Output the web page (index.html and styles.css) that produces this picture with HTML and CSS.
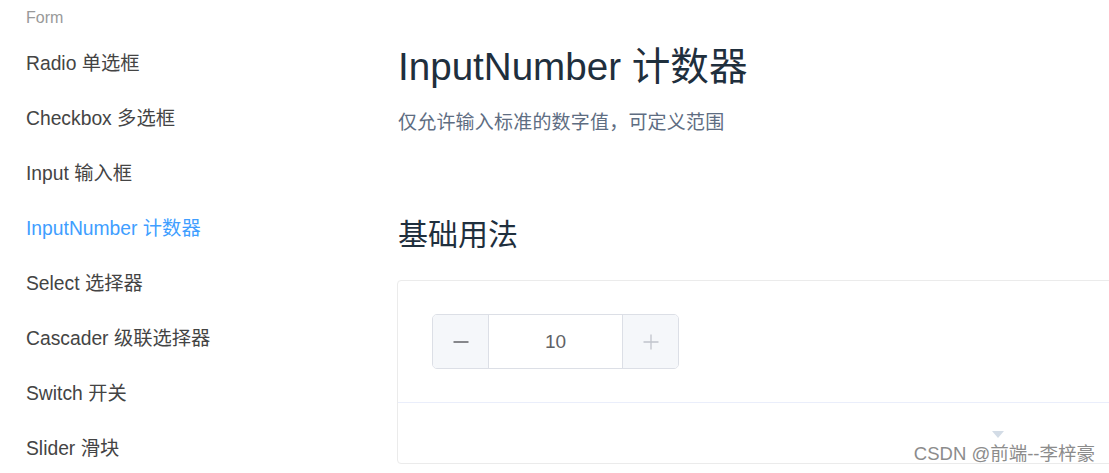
FILE: index.html
```html
<!DOCTYPE html>
<html lang="zh">
<head>
<meta charset="utf-8">
<title>InputNumber 计数器</title>
<link rel="stylesheet" href="styles.css">
</head>
<body>
<div class="page">
  <nav class="side-nav">
    <div class="group-title">Form</div>
    <ul class="nav-list">
      <li class="nav-item">Radio 单选框</li>
      <li class="nav-item">Checkbox 多选框</li>
      <li class="nav-item">Input 输入框</li>
      <li class="nav-item active">InputNumber 计数器</li>
      <li class="nav-item">Select 选择器</li>
      <li class="nav-item">Cascader 级联选择器</li>
      <li class="nav-item">Switch 开关</li>
      <li class="nav-item">Slider 滑块</li>
    </ul>
  </nav>
  <main class="content">
    <h2 class="title">InputNumber 计数器</h2>
    <p class="desc">仅允许输入标准的数字值，可定义范围</p>
    <h3 class="section">基础用法</h3>
    <div class="demo-block">
      <div class="demo-source">
        <div class="input-number">
          <span class="btn btn-dec">
            <svg width="16" height="16" viewBox="0 0 16 16"><path d="M0.5 8 H15.5" stroke="#606266" stroke-width="1.6" fill="none"/></svg>
          </span>
          <span class="value">10</span>
          <span class="btn btn-inc disabled">
            <svg width="16" height="16" viewBox="0 0 16 16"><path d="M0.5 8 H15.5 M8 0.5 V15.5" stroke="#c0c4cc" stroke-width="1.3" fill="none"/></svg>
          </span>
        </div>
      </div>
      <div class="demo-control">
        <span class="caret"></span>
      </div>
    </div>
  </main>
</div>
<div class="watermark">CSDN @前端--李梓豪</div>
</body>
</html>
```
FILE: styles.css
```css
html, body {
  margin: 0;
  padding: 0;
  overflow: hidden;
  background: #fff;
  font-family: "Liberation Sans", Arial, "Noto Sans CJK SC", sans-serif;
}

.page {
  display: flex;
  width: 1109px;
  height: 473px;
}

.side-nav {
  flex: 0 0 372px;
  padding-left: 26px;
}

.group-title {
  font-size: 16px;
  line-height: 35px;
  height: 36px;
  color: #999;
}

.nav-list {
  list-style: none;
  margin: 0;
  padding: 0;
}

.nav-item {
  font-size: 19.3px;
  line-height: 55px;
  height: 55px;
  color: #444;
  white-space: nowrap;
}

.nav-item.active {
  color: #409eff;
}

.content {
  flex: 1 1 auto;
  min-width: 0;
}

.title {
  margin: 44px 0 0;
  font-size: 38.6px;
  font-weight: 400;
  line-height: 46px;
  color: #1f2f3d;
  white-space: nowrap;
}

.desc {
  margin: 19px 0 0;
  font-size: 19px;
  line-height: 28px;
  letter-spacing: 0.2px;
  color: #5e6d82;
  white-space: nowrap;
}

.section {
  margin: 78px 0 0;
  font-size: 30px;
  font-weight: 400;
  line-height: 40px;
  color: #1f2f3d;
}

.demo-block {
  margin-top: 25px;
  margin-left: -1px;
  width: 1199px;
  border: 1px solid #ebebeb;
  border-radius: 4px;
}

.demo-source {
  padding: 33px 34px;
  border-bottom: 1px solid #eaeefb;
}

.input-number {
  display: flex;
  width: 245px;
  height: 53px;
  border: 1px solid #dcdfe6;
  border-radius: 5px;
  overflow: hidden;
}

.btn {
  flex: 0 0 55px;
  display: flex;
  align-items: center;
  justify-content: center;
  background: #f5f7fa;
}

.btn-dec {
  border-right: 1px solid #dcdfe6;
}

.btn-inc {
  border-left: 1px solid #dcdfe6;
}

.value {
  flex: 1 1 auto;
  display: flex;
  align-items: center;
  justify-content: center;
  font-size: 19px;
  color: #606266;
}

.demo-control {
  height: 60px;
  display: flex;
  align-items: center;
  justify-content: center;
}

.caret {
  width: 0;
  height: 0;
  border-left: 6px solid transparent;
  border-right: 6px solid transparent;
  border-top: 7px solid #d3dce6;
  margin-top: 2px;
}

.watermark {
  position: absolute;
  right: 14px;
  bottom: 7px;
  font-size: 18.5px;
  line-height: 24px;
  color: #8c8c8c;
  text-shadow: 0 0 2px #fff;
  white-space: nowrap;
}
```
